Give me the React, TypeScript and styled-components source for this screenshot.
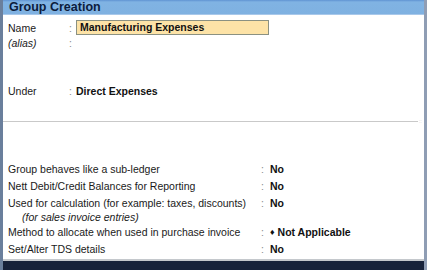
import React from 'react'
import styled, { createGlobalStyle } from 'styled-components'

const Global = createGlobalStyle`
html, body {
  margin: 0;
  padding: 0;
  background: #ffffff;
}
body {
  font-family: "Liberation Sans", Arial, sans-serif;
}
`

type Row = { label: string; value: string; note?: string; bullet?: boolean }

const rows: Row[] = [
  { label: 'Group behaves like a sub-ledger', value: 'No' },
  { label: 'Nett Debit/Credit Balances for Reporting', value: 'No' },
  { label: 'Used for calculation (for example: taxes, discounts)', value: 'No', note: '(for sales invoice entries)' },
  { label: 'Method to allocate when used in purchase invoice', value: 'Not Applicable', bullet: true },
  { label: 'Set/Alter TDS details', value: 'No' },
]

const App = () => {
  return (
    <>
      <Global />
      <Window>
        <TitleBar>Group Creation</TitleBar>
        <Body>
          <Top>
            <Field>
              <Label>Name</Label>
              <Colon>:</Colon>
              <NameBox>Manufacturing Expenses</NameBox>
            </Field>
            <Field>
              <Label italic>(alias)</Label>
              <Colon>:</Colon>
            </Field>
            <UnderField>
              <Label>Under</Label>
              <Colon>:</Colon>
              <Value>Direct Expenses</Value>
            </UnderField>
          </Top>
          <Divider>
            <Line />
            <Dots>::</Dots>
          </Divider>
          <Options>
            {rows.map((r) => (
              <OptRow key={r.label}>
                <OptLabel>
                  {r.label}
                  {r.note && <Note>{r.note}</Note>}
                </OptLabel>
                <OptColon>:</OptColon>
                <Value>
                  {r.bullet && <Bullet>♦</Bullet>}
                  {r.value}
                </Value>
              </OptRow>
            ))}
          </Options>
        </Body>
        <Footer />
      </Window>
    </>
  )
}

export default App

const Window = styled.div`
width: 427px;
height: 270px;
display: flex;
flex-direction: column;
background: #ffffff;
border-left: 3px solid #6a7f9c;
border-right: 3px solid #8f9db4;
box-sizing: border-box;
overflow: hidden;
`
const TitleBar = styled.div`
height: 14px;
line-height: 15px;
padding-left: 6px;
font-size: 12.5px;
font-weight: 700;
color: #0c1c3c;
background: linear-gradient(#5f93d2 0px, #80b3e3 2px, #7fb1e1 100%);
border-bottom: 1px solid #a8c8ea;
overflow: hidden;
`
const Body = styled.div`
flex: 1;
display: flex;
flex-direction: column;
padding-left: 5px;
`
const Top = styled.div`
display: flex;
flex-direction: column;
padding-top: 5px;
`
const Field = styled.div`
display: flex;
align-items: center;
height: 15px;
font-size: 10.5px;
color: #1a1a1a;
`
const UnderField = styled(Field)`
margin-top: 33px;
`
const Label = styled.div<{ italic?: boolean }>`
width: 61px;
font-style: ${(p) => (p.italic ? 'italic' : 'normal')};
`
const Colon = styled.div`
width: 7px;
color: #8a8a8a;
`
const NameBox = styled.div`
width: 188px;
height: 13px;
line-height: 13px;
padding-left: 3px;
background: #fde3a7;
border: 1px solid #8b9182;
font-weight: 700;
font-size: 10.5px;
color: #111;
`
const Value = styled.div`
font-weight: 700;
font-size: 10.5px;
color: #111;
display: flex;
align-items: center;
`
const Bullet = styled.span`
font-size: 9px;
margin-right: 3px;
`
const Divider = styled.div`
display: flex;
align-items: center;
margin-top: 20px;
margin-left: -5px;
margin-right: 2px;
`
const Line = styled.div`
flex: 1;
height: 1px;
background: #c9c9c9;
`
const Dots = styled.div`
font-size: 6px;
color: #d0d0d0;
margin-left: 1px;
`
const Options = styled.div`
display: flex;
flex-direction: column;
margin-top: 38px;
gap: 2px;
`
const OptRow = styled.div`
display: flex;
align-items: flex-start;
font-size: 10.5px;
color: #1a1a1a;
line-height: 15px;
`
const OptLabel = styled.div`
width: 253px;
display: flex;
flex-direction: column;
`
const Note = styled.div`
font-style: italic;
padding-left: 14px;
line-height: 12px;
`
const OptColon = styled.div`
width: 9px;
color: #8a8a8a;
`
const Footer = styled.div`
height: 9px;
border-top: 2px solid #c4c8cc;
background: #17223a;
margin-left: -3px;
margin-right: -3px;
`
